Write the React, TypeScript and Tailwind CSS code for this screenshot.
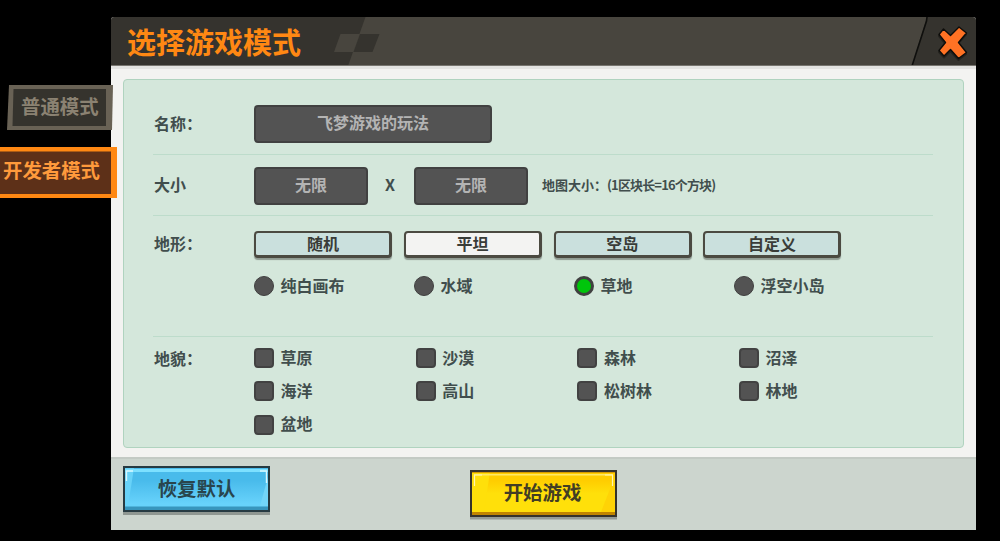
import React from 'react';

const GROUND_SHAPES = ['随机', '平坦', '空岛', '自定义'];
const SURFACES = ['纯白画布', '水域', '草地', '浮空小岛'];
const BIOMES = ['草原', '沙漠', '森林', '沼泽', '海洋', '高山', '松树林', '林地', '盆地'];

interface FieldProps {
  value: string;
  className: string;
}

const Field: React.FC<FieldProps> = ({ value, className }) => (
  <div
    className={`flex items-center justify-center h-[38px] rounded-[4px] border-2 border-[#414141] bg-[#535353] text-[#b4b4b4] pb-[5px] ${className}`}
  >
    {value}
  </div>
);

interface RowProps {
  label: string;
  className: string;
  labelClass: string;
  children: React.ReactNode;
}

const Row: React.FC<RowProps> = ({ label, className, labelClass, children }) => (
  <div className={`flex items-start ${className}`}>
    <span className={`w-[100px] shrink-0 ${labelClass}`}>{label}</span>
    {children}
  </div>
);

const ModeTabs: React.FC = () => (
  <div className="relative z-10 w-[111px] shrink-0 pt-[85px]">
    <button className="relative block w-[106px] h-[45px] ml-[7px] pb-[3px] text-[19.4px] leading-[42px] text-[#8b8272] text-left pl-[14px] whitespace-nowrap">
      <svg className="absolute inset-0" width="106" height="45" viewBox="0 0 106 45">
        <path d="M2 0H106L105 45H0Z" fill="#696255" />
        <path d="M6.5 4H99V41H5.5Z" fill="#35332d" />
      </svg>
      <span className="relative">普通模式</span>
    </button>
    <button className="relative block w-[117px] h-[51px] mt-[17px] pb-[6px] text-[19.4px] leading-[42px] text-[#ff9a3c] text-left pl-[3px] whitespace-nowrap">
      <svg className="absolute inset-0" width="117" height="51" viewBox="0 0 117 51">
        <path d="M0 0H117V51H0Z" fill="#ff8813" />
        <path d="M0 4.5H111V47H0Z" fill="#5d3018" />
      </svg>
      <span className="relative">开发者模式</span>
    </button>
  </div>
);

const Header: React.FC = () => (
  <header className="relative h-[49px] flex items-center justify-between shrink-0 rounded-t-[3px] overflow-hidden bg-[#35332e] border-b border-[#77756f]">
    <svg className="absolute inset-0" width="865" height="49" viewBox="0 0 865 49">
      <path d="M254.5 0H816L801 49H237Z" fill="#48453e" />
      <path d="M229.5 17H249L242.5 35H223Z" fill="#48453e" />
      <path d="M249 17H268.5L261.5 35H242.5Z" fill="#35332e" />
      <path d="M816 0L815.5 4L801 49" fill="none" stroke="#0f0f0d" strokeWidth="1.6" />
    </svg>
    <h1 className="relative pl-4 pt-px text-[29px] leading-none text-[#ff8813]">选择游戏模式</h1>
    <button className="relative mr-[7px] mt-[4px]" aria-label="关闭">
      <svg width="32" height="36" viewBox="0 0 32 36">
        <path
          d="M6.5 6L13.5 12L22 4L29 9.5L21 18.5L29 29L21.5 35L13.5 26L7 32.5L2 27L8.5 19L2 11Z"
          fill="#24231f"
          stroke="#24231f"
          strokeWidth="2"
          strokeLinejoin="round"
        />
        <path
          d="M6.5 4L13.5 10.5L22 2L29.5 8L21.5 17.5L29.5 27.5L21.5 33.5L13.5 24.5L7 31L2 25.5L8.5 17.5L2 9.5Z"
          fill="#ff7224"
          stroke="#0d0d0b"
          strokeWidth="1.4"
          strokeLinejoin="round"
        />
      </svg>
    </button>
  </header>
);

const Footer: React.FC = () => (
  <footer className="flex items-start h-[73px] shrink-0 pl-3 bg-[#ccd5ce] border-t-2 border-[#c3cac4] text-[19.4px]">
    <button className="relative w-[147px] h-[46px] mt-[7px] border-2 border-[#263a42] bg-[#4bbcec] text-[#28454d] shadow-[0_3px_0_#8f9792]">
      <svg className="absolute inset-0" width="143" height="42" viewBox="0 0 143 42">
        <defs>
          <linearGradient id="blue" x1="0" y1="0" x2="0" y2="1">
            <stop offset="0.3" stopColor="#49bbeb" />
            <stop offset="0.85" stopColor="#67d2fb" />
          </linearGradient>
        </defs>
        <path d="M0 0H143V42H0Z" fill="url(#blue)" />
        <path d="M0 0H9L3 38H0Z" fill="#68d2f8" />
        <path d="M143 9V38H135Z" fill="#72d5f9" />
        <path d="M0 1H143V4H0Z" fill="#7de0ff" />
        <path d="M1.5 13V3H8M135 3H141.5V15" fill="none" stroke="#d8f7ff" strokeWidth="1.4" />
        <path d="M0 38.5H143V42H0Z" fill="#3795bd" />
      </svg>
      <span className="relative -top-px">恢复默认</span>
    </button>
    <button className="relative w-[147px] h-[47px] mt-[11px] ml-[200px] border-2 border-[#35332b] bg-[#ffe00a] text-[#423d24] shadow-[0_2.5px_0_#949b96]">
      <svg className="absolute inset-0" width="143" height="43" viewBox="0 0 143 43">
        <defs>
          <linearGradient id="yellow" x1="0" y1="0" x2="0" y2="1">
            <stop offset="0.2" stopColor="#ffcd00" />
            <stop offset="0.5" stopColor="#ffe00a" />
          </linearGradient>
        </defs>
        <path d="M0 0H143V43H0Z" fill="url(#yellow)" />
        <path d="M0 0H18L12 40H0Z" fill="#ffe00a" />
        <path d="M143 4V40H129Z" fill="#ffd306" />
        <path d="M0 0H143V1H0Z" fill="#d79a00" />
        <path d="M2 2H141V3.5H2Z" fill="#ffe766" />
        <path d="M2.5 14V3H10M133 3H140.5V14" fill="none" stroke="#fff5b0" strokeWidth="1.2" />
        <path d="M0 40H143V43H0Z" fill="#c18500" />
      </svg>
      <span className="relative -left-px -top-[2px]">开始游戏</span>
    </button>
  </footer>
);

export default function App() {
  return (
    <div className="flex w-[1000px] h-[541px] overflow-hidden bg-black font-bold font-['Noto_Sans_CJK_SC',sans-serif]">
      <ModeTabs />
      <div className="flex flex-col w-[865px] h-[513px] mt-[17px] shrink-0 rounded-t-[3px] bg-[#f3f3f1]">
        <Header />
        <main className="flex-1 px-3 pt-[10px] pb-[9px] border-t-[3px] border-[#e3e3e1]">
          <section className="h-[369px] w-[841px] pl-[29px] pr-[30px] rounded-[4px] border border-[#b0d3bf] bg-[#d4e7db] text-base leading-6 text-[#414e4d]">
            <Row label="名称：" className="h-[75px] pt-[25px] border-b border-[#bddccb]" labelClass="pt-[6px] pl-px">
              <Field value="飞梦游戏的玩法" className="w-[238px] ml-px" />
            </Row>

            <Row label="大小" className="h-[61px] pt-[12px] border-b border-[#bddccb]" labelClass="pt-[5px] pl-px">
              <Field value="无限" className="w-[114px] ml-px" />
              <span className="w-[46px] pt-[5px] pr-[2px] text-center">X</span>
              <Field value="无限" className="w-[114px]" />
              <span className="ml-[14px] pt-[6px] text-[13px] whitespace-nowrap">
                地图大小：<span className="tracking-[-0.85px]">(1区块长=16个方块)</span>
              </span>
            </Row>

            <Row label="地形：" className="h-[121px] pt-[15px] border-b border-[#bddccb]" labelClass="pl-px">
              <div>
                <div className="flex gap-[11.7px] ml-[1.4px]">
                  {GROUND_SHAPES.map((name) => (
                    <button
                      key={name}
                      className={`flex items-center justify-center w-[138px] h-[27px] pb-[2px] rounded-[4px] border-t-2 border-l-2 border-r-[3px] border-b-[3px] border-[#4b4a41] text-[#393c38] shadow-[0_2px_1px_#8f9b92] ${
                        name === '平坦' ? 'bg-[#f3f3f2]' : 'bg-[#cae0dd]'
                      }`}
                    >
                      {name}
                    </button>
                  ))}
                </div>
                <div className="flex mt-[15px] ml-px">
                  {SURFACES.map((name) => (
                    <label key={name} className="flex items-center w-[160px] h-6 gap-[6.5px]">
                      <span
                        className={`size-[20px] mt-px rounded-full border-[#404040] ${
                          name === '草地' ? 'border-[3px] bg-[#00c50b]' : 'border-[1.5px] bg-[#535353]'
                        }`}
                      />
                      <span className="-mt-px">{name}</span>
                    </label>
                  ))}
                </div>
              </div>
            </Row>

            <Row label="地貌：" className="pt-[9px]" labelClass="pl-px">
              <div className="grid grid-cols-[repeat(4,161.7px)] gap-y-[9.3px] ml-px">
                {BIOMES.map((name) => (
                  <label key={name} className="flex items-center h-6 gap-[6.5px]">
                    <span className="size-[20px] rounded-[4px] border-2 border-[#424242] bg-[#535353]" />
                    <span className="-mt-[3px]">{name}</span>
                  </label>
                ))}
              </div>
            </Row>
          </section>
        </main>
        <Footer />
      </div>
    </div>
  );
}
